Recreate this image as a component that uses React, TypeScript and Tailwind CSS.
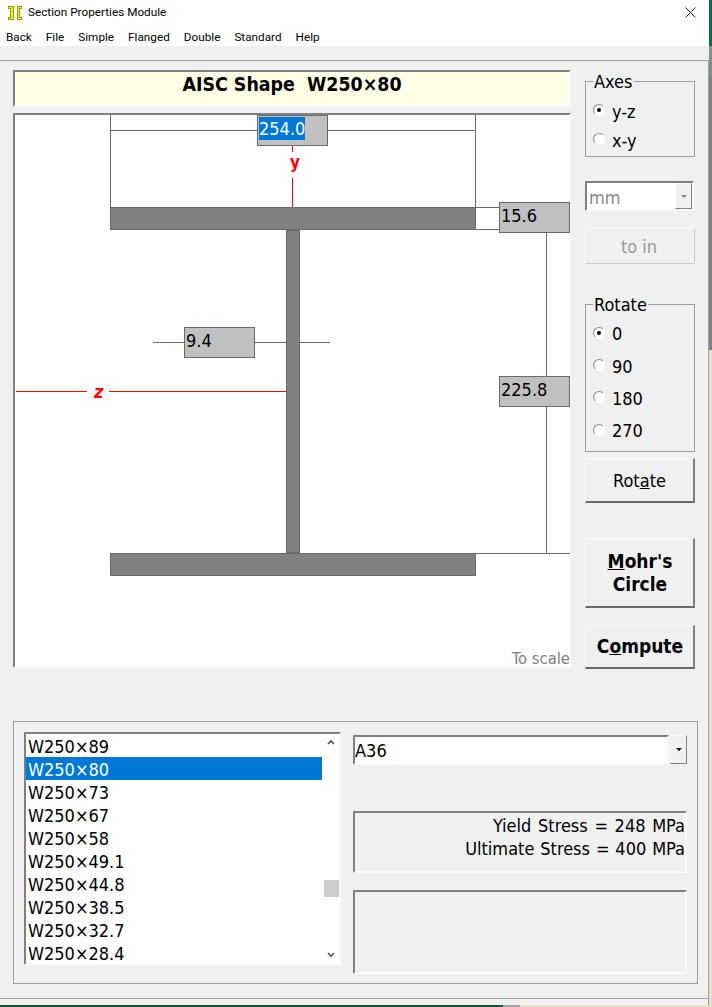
import { ReactNode } from "react";

const sections = [
  "W250×89",
  "W250×80",
  "W250×73",
  "W250×67",
  "W250×58",
  "W250×49.1",
  "W250×44.8",
  "W250×38.5",
  "W250×32.7",
  "W250×28.4",
];

const menus = ["Back", "File", "Simple", "Flanged", "Double", "Standard", "Help"];

const Radio = ({ label, rowClass, checked = false }: { label: string; rowClass: string; checked?: boolean }) => (
  <div className={`flex items-center ${rowClass}`}>
    <div className="relative mb-[3px] h-[12px] w-[12px] rounded-full border border-t-[#8a8a8a] border-l-[#8a8a8a] border-r-[#fafafa] border-b-[#fafafa] bg-white">
      {checked && <div className="absolute left-[3px] top-[3px] h-[4px] w-[4px] rounded-full bg-black" />}
    </div>
    <span className="ml-[7px] text-[18px] leading-none text-black">{label}</span>
  </div>
);

const Group = ({ title, children, className }: { title: string; children: ReactNode; className: string }) => (
  <div className={`relative border border-[#a0a0a0] ${className}`}>
    <div className="absolute left-[7px] top-[-10px] bg-[#f0f0f0] px-px text-[18px] leading-[20px] text-black">{title}</div>
    {children}
  </div>
);

const Raised = ({ children, className }: { children: ReactNode; className: string }) => (
  <div className={`flex flex-col items-center justify-center border-t border-l border-t-[#fafafa] border-l-[#fafafa] bg-[#f0f0f0] text-center ${className}`}>
    {children}
  </div>
);

const Sunken = ({ children, className }: { children?: ReactNode; className: string }) => (
  <div className={`border-2 border-t-[#808080] border-l-[#808080] border-r-[#fafafa] border-b-[#fafafa] ${className}`}>
    {children}
  </div>
);

const DimBox = ({ value, className }: { value: string; className: string }) => (
  <div className={`absolute flex h-[31px] w-[71px] items-start border border-[#696969] bg-[#c0c0c0] pl-[1px] pt-[1px] text-[18px] leading-[23px] text-black ${className}`}>
    {value}
  </div>
);

const Drawing = () => (
  <svg className="absolute left-0 top-0 h-[555px] w-[558px]" viewBox="13 113 558 555" shapeRendering="crispEdges">
    <g stroke="#696969" fill="none">
      <path d="M110.5 115V207M475.5 115V207M110 130.5H476" />
      <path d="M476 207.5H500M476 229.5H500M546.5 233V553M476 553.5H570" />
      <path d="M153 342.5H330" />
    </g>
    <g stroke="#696969" fill="#808080">
      <rect x="110.5" y="207.5" width="365" height="22" />
      <rect x="286.5" y="230.5" width="13" height="322" />
      <rect x="110.5" y="553.5" width="365" height="22" />
    </g>
    <path d="M292.5 146V152M292.5 178V207M16 391.5H87M109 391.5H286" stroke="#ff0000" />
  </svg>
);

const ScreenEdge = () => (
  <div className="flex w-[3px] flex-col">
    <div className="h-[46px] bg-[#0f6b4c]" />
    <div className="h-[32px] bg-[#7c9488]" />
    <div className="h-[272px] bg-[#808080]" />
    <div className="flex-1 bg-[#e4e3c8]" />
  </div>
);

export default function App() {
  return (
    <div
      className="flex h-[1007px] w-[712px] overflow-hidden bg-white"
      style={{ fontFamily: '"DejaVu Sans Condensed", "Noto Sans", sans-serif' }}
    >
      <div className="flex w-[709px] flex-col">
        <div className="flex h-[25px] items-center bg-white pl-[8px] pr-[13px] pt-[1px]">
          <svg className="h-[14px] w-[14px]" viewBox="0 0 14 14" shapeRendering="crispEdges">
            <path d="M0.5 0.5H5.5V13.5H0.5V11.5H2.5V2.5H0.5ZM13.5 0.5H9.5V13.5H13.5V11.5H11.5V2.5H13.5Z" fill="#f6f000" stroke="#9a9a10" />
          </svg>
          <span className="ml-[6px] text-[11.75px] text-black" style={{ fontFamily: "Roboto, sans-serif" }}>
            Section Properties Module
          </span>
          <svg className="ml-auto mb-[2px] h-[11px] w-[11px]" viewBox="0 0 11 11">
            <path d="M0.5 0.5L10.5 10.5M10.5 0.5L0.5 10.5" stroke="#222" strokeWidth="1" />
          </svg>
        </div>
        <div className="flex h-[21px] items-center gap-[14px] bg-white pl-[6px] pt-[4px] text-[11.75px] text-black" style={{ fontFamily: "Roboto, sans-serif" }}>
          {menus.map((m) => (
            <span key={m}>{m}</span>
          ))}
        </div>
        <div className="h-[14px] bg-[#f0f0f0]" />
        <div className="flex-1 border-y border-r border-[#a0a0a0] bg-[#f0f0f0] pl-[13px] pt-[9px]">
          <div className="flex">
            <div className="flex w-[558px] flex-col">
              <Sunken className="flex h-[37px] items-center justify-center bg-[#ffffe6] pb-[8px] text-[19.4px] font-bold text-black">
                <span>AISC Shape&nbsp; W250×80</span>
              </Sunken>
              <div className="relative mt-[6px] h-[555px] border-2 border-t-[#808080] border-l-[#808080] border-r-[#fafafa] border-b-[#fafafa] bg-white">
                <div className="absolute -left-[2px] -top-[2px] h-[555px] w-[558px]">
                  <Drawing />
                  <div className="absolute left-[244px] top-[2px] flex h-[31px] w-[71px] border border-[#696969] bg-[#c0c0c0] pl-[1px] pt-[1px]">
                    <span className="h-[23px] bg-[#0078d7] text-[18px] leading-[23px] text-white">254.0</span>
                  </div>
                  <DimBox value="15.6" className="left-[486px] top-[89px]" />
                  <DimBox value="225.8" className="left-[486px] top-[263px]" />
                  <DimBox value="9.4" className="left-[171px] top-[214px]" />
                  <span className="absolute left-[277px] top-[39px] text-[17px] font-bold leading-[20px] text-[#ff0000]">y</span>
                  <span className="absolute left-[81px] top-[269px] text-[18px] font-bold italic leading-[20px] text-[#ff0000]">z</span>
                  <span className="absolute bottom-[-1px] right-[1px] text-[16.5px] leading-[20px] text-[#808080]">To scale</span>
                </div>
              </div>
            </div>
            <div className="ml-[14px] flex w-[110px] flex-col pt-[11px]">
              <Group title="Axes" className="h-[76px] pl-[7px] pt-[15px]">
                <Radio label="y-z" rowClass="h-[29px]" checked />
                <Radio label="x-y" rowClass="h-[29px]" />
              </Group>
              <div className="mt-[24px] flex h-[30px] w-[109px] border-2 border-t-[#808080] border-l-[#808080] border-r-[#fafafa] border-b-[#fafafa] bg-white">
                <span className="flex-1 pl-[2px] pt-px text-[18px] leading-[27px] text-[#8a8a8a]">mm</span>
                <div className="flex w-[17px] items-center justify-center border border-r-[#808080] border-b-[#808080] border-t-[#fafafa] border-l-[#fafafa] bg-[#f0f0f0]">
                  <div className="h-0 w-0 border-x-[3px] border-t-[3px] border-x-transparent border-t-[#8a8a8a]" />
                </div>
              </div>
              <Raised className="mt-[17px] h-[36px] border-r border-b border-r-[#c8c8c8] border-b-[#c8c8c8] pr-[2px] text-[18px] text-[#9a9a9a]">to in</Raised>
              <Group title="Rotate" className="mt-[40px] h-[148px] pl-[7px] pt-[13px]">
                <Radio label="0" rowClass="h-[32.4px]" checked />
                <Radio label="90" rowClass="h-[32.4px]" />
                <Radio label="180" rowClass="h-[32.4px]" />
                <Radio label="270" rowClass="h-[32.4px]" />
              </Group>
              <Raised className="mt-[6px] h-[45px] border-r-2 border-b-2 border-r-[#808080] border-b-[#696969] text-[18px] text-black">
                <span>
                  Rot<span className="underline">a</span>te
                </span>
              </Raised>
              <Raised className="mt-[35px] h-[70px] border-r-2 border-b-2 border-r-[#808080] border-b-[#696969] pl-px text-[19px] font-bold leading-[23px] text-black">
                <span>
                  <span className="underline">M</span>ohr's
                </span>
                <span>Circle</span>
              </Raised>
              <Raised className="mt-[17px] h-[44px] border-r-2 border-b-2 border-r-[#808080] border-b-[#696969] pl-px text-[19px] font-bold text-black">
                <span>
                  C<span className="underline">o</span>mpute
                </span>
              </Raised>
            </div>
          </div>
          <div className="mt-[52px] flex h-[263px] w-[685px] border border-[#a0a0a0] pl-[10px] pt-[10px]">
            <Sunken className="flex h-[233px] w-[317px] bg-white">
              <div className="flex-1 text-[18px] leading-[23px] text-black">
                {sections.map((s, i) => (
                  <div key={s} className={`pl-[2px] ${i === 1 ? "bg-[#0078d7] text-white" : ""}`}>
                    <span className="relative top-px">{s}</span>
                  </div>
                ))}
              </div>
              <div className="ml-px flex w-[16px] flex-col items-center bg-white py-[5px] text-[#505050]">
                <svg className="h-[6px] w-[8px]" viewBox="0 0 8 6">
                  <path d="M1 5L4 2L7 5" stroke="currentColor" strokeWidth="1.6" fill="none" />
                </svg>
                <div className="mt-[135px] h-[17px] w-[15px] bg-[#cdcdcd]" />
                <svg className="mt-auto h-[6px] w-[8px]" viewBox="0 0 8 6">
                  <path d="M1 1L4 4L7 1" stroke="currentColor" strokeWidth="1.6" fill="none" />
                </svg>
              </div>
            </Sunken>
            <div className="ml-[12px] flex w-[334px] flex-col">
              <div className="mt-[3px] flex h-[30px]">
                <Sunken className="flex-1 bg-white text-[18px] leading-[27px] text-black">A36</Sunken>
                <div className="ml-px flex h-[29px] w-[17px] items-center justify-center border border-t-[#fafafa] border-l-[#fafafa] border-r-[#808080] border-b-[#808080] bg-[#f0f0f0]">
                  <div className="h-0 w-0 border-x-[3px] border-t-[3px] border-x-transparent border-t-black" />
                </div>
              </div>
              <Sunken className="mt-[46px] h-[62px] pt-[1px] text-right text-[18px] leading-[23px] text-black">
                <div className="[word-spacing:1.5px]">Yield Stress = 248 MPa</div>
                <div className="[word-spacing:0.75px]">Ultimate Stress = 400 MPa</div>
              </Sunken>
              <Sunken className="mt-[17px] h-[84px]" />
            </div>
          </div>
        </div>
        <div className="h-[6px] border-r border-[#a0a0a0] bg-[#f0f0f0]" />
        <div className="flex h-[2px]">
          <div className="w-[503px] bg-[#0f5a3c]" />
          <div className="w-[17px] bg-[#a8a8a8]" />
          <div className="flex-1 bg-[#e4e3c8]" />
        </div>
      </div>
      <ScreenEdge />
    </div>
  );
}
